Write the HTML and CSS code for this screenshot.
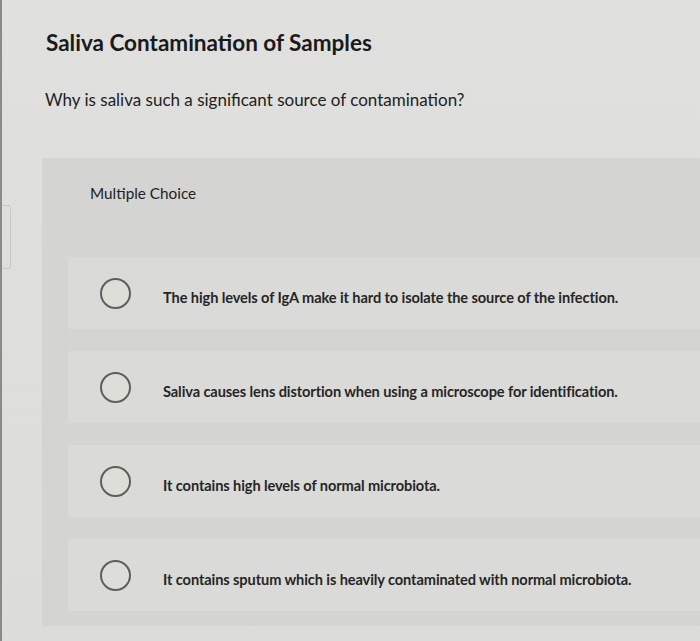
FILE: index.html
```html
<!DOCTYPE html>
<html>
<head>
<meta charset="utf-8">
<link rel="stylesheet" href="styles.css">
</head>
<body>
<div class="page">
  <div class="edge-tab"></div>
  <h1 class="title">Saliva Contamination of Samples</h1>
  <p class="question">Why is saliva such a significant source of contamination?</p>
  <div class="panel">
    <div class="label">Multiple Choice</div>
    <div class="options">
      <div class="option"><span class="radio"></span><span class="text">The high levels of IgA make it hard to isolate the source of the infection.</span></div>
      <div class="option"><span class="radio"></span><span class="text">Saliva causes lens distortion when using a microscope for identification.</span></div>
      <div class="option"><span class="radio"></span><span class="text">It contains high levels of normal microbiota.</span></div>
      <div class="option"><span class="radio"></span><span class="text">It contains sputum which is heavily contaminated with normal microbiota.</span></div>
    </div>
  </div>
</div>
</body>
</html>
```
FILE: styles.css
```css
html, body {
  margin: 0;
  padding: 0;
}
body {
  width: 700px;
  height: 641px;
  overflow: hidden;
  background: #e2e2e0;
  font-family: Lato, "Open Sans", "Liberation Sans", sans-serif;
  color: #1f1f1f;
}
.page {
  position: relative;
  height: 641px;
  border-left: 2px solid #8a8a88;
  box-sizing: border-box;
  padding-top: 28px;
  background: linear-gradient(180deg, #e0e0de 0%, #dcdcda 100%);
}
.edge-tab {
  position: absolute;
  left: 0;
  top: 205px;
  width: 8px;
  height: 62px;
  border: 1px solid #c8c8c6;
  border-left: none;
  border-radius: 0 3px 3px 0;
}
.title {
  margin: 0 0 0 44px;
  font-size: 22.5px;
  font-weight: 700;
  line-height: 30px;
  color: #1a1a1a;
}
.question {
  margin: 30px 0 0 43px;
  font-size: 17px;
  line-height: 24px;
  color: #222;
}
.panel {
  margin: 46px 0 0 40px;
  background: #d4d4d2;
  padding: 25px 0 15px 26px;
  height: 468px;
  box-sizing: border-box;
}
.label {
  margin-left: 22px;
  font-size: 15.3px;
  line-height: 20px;
  color: #222;
}
.options {
  margin-top: 54px;
  display: flex;
  flex-direction: column;
  gap: 22px;
}
.option {
  height: 72px;
  background: #dadad8;
  display: flex;
  align-items: center;
}
.radio {
  width: 27px;
  height: 27px;
  border: 2px solid #5e5e5e;
  border-radius: 50%;
  margin-left: 32px;
  flex: none;
  background: #deded9;
}
.text {
  margin-left: 32px;
  margin-top: 8px;
  font-size: 14.6px;
  font-weight: 700;
  color: #262626;
  letter-spacing: -0.1px;
}
```
